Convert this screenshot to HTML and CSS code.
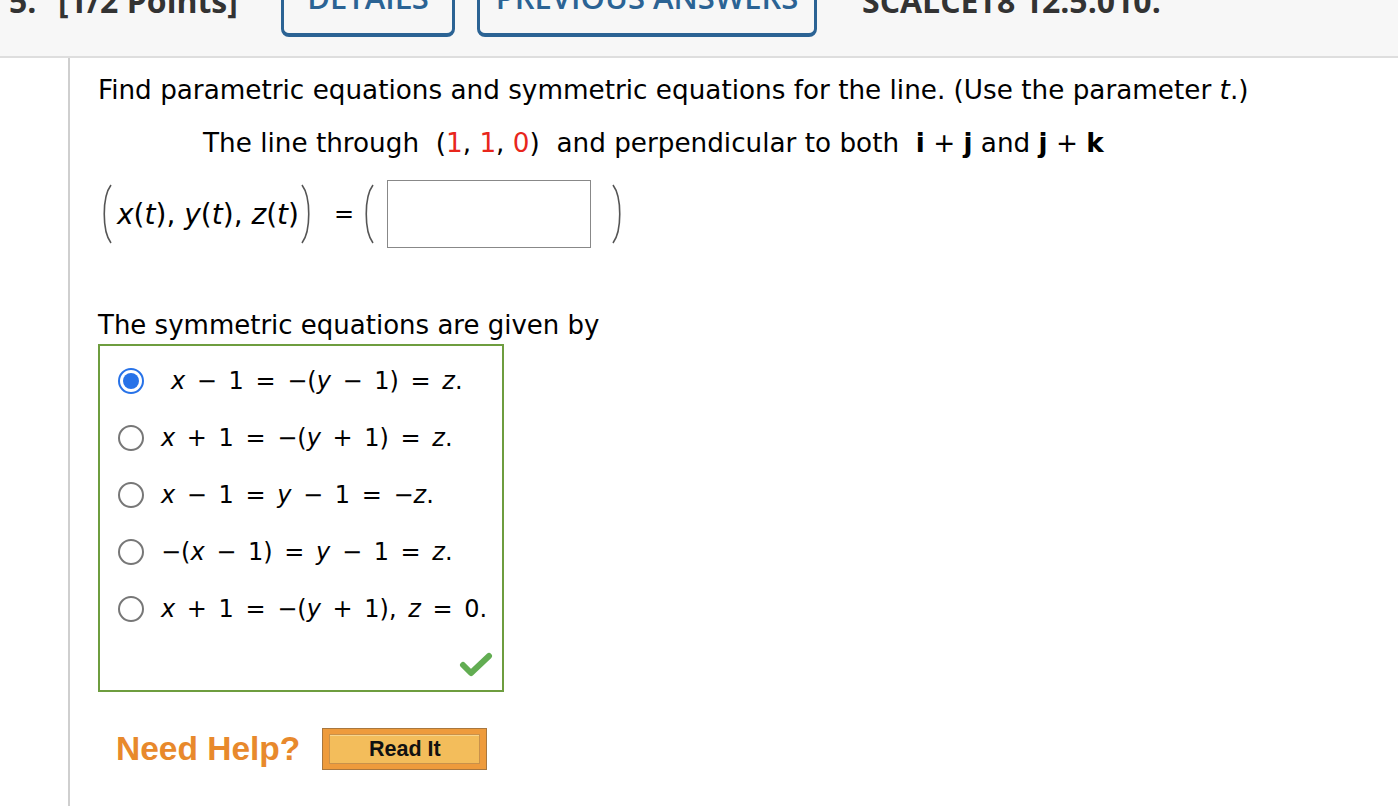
FILE: index.html
```html
<!DOCTYPE html>
<html>
<head>
<meta charset="utf-8">
<link rel="stylesheet" href="styles.css">
</head>
<body>
<div class="header">
  <div class="qnum">5.</div>
  <div class="points">[1/2 Points]</div>
  <div class="hbtn details">DETAILS</div>
  <div class="hbtn prev">PREVIOUS ANSWERS</div>
  <div class="code">SCALCET8 12.5.010.</div>
</div>
<div class="main">
  <div class="rail"></div>
  <div class="content">
    <p class="prompt">Find parametric equations and symmetric equations for the line. (Use the parameter <i>t</i>.)</p>
    <p class="given">The line through&nbsp; (<span class="red">1</span>, <span class="red">1</span>, <span class="red">0</span>)&nbsp; and perpendicular to both&nbsp; <b>i</b> + <b>j</b> and <b>j</b> + <b>k</b></p>
    <div class="eqrow">
      <svg class="paren p1" width="14" height="62" viewBox="0 0 14 62"><path d="M12 2 C3 14 3 48 12 60" fill="none" stroke="#555" stroke-width="1.6"/></svg>
      <span class="fn"><i>x</i>(<i>t</i>), <i>y</i>(<i>t</i>), <i>z</i>(<i>t</i>)</span>
      <svg class="paren p2" width="14" height="62" viewBox="0 0 14 62"><path d="M2 2 C11 14 11 48 2 60" fill="none" stroke="#555" stroke-width="1.6"/></svg>
      <span class="eq">=</span>
      <svg class="paren p3" width="14" height="62" viewBox="0 0 14 62"><path d="M12 2 C3 14 3 48 12 60" fill="none" stroke="#555" stroke-width="1.6"/></svg>
      <div class="inbox"></div>
      <svg class="paren p4" width="14" height="62" viewBox="0 0 14 62"><path d="M2 2 C11 14 11 48 2 60" fill="none" stroke="#555" stroke-width="1.6"/></svg>
    </div>
    <p class="symlabel">The symmetric equations are given by</p>
    <div class="choices">
      <div class="opt"><span class="radio on"></span><span class="m first"><i>x</i> − 1 = −(<i>y</i> − 1) = <i>z</i>.</span></div>
      <div class="opt"><span class="radio"></span><span class="m"><i>x</i> + 1 = −(<i>y</i> + 1) = <i>z</i>.</span></div>
      <div class="opt"><span class="radio"></span><span class="m"><i>x</i> − 1 = <i>y</i> − 1 = −<i>z</i>.</span></div>
      <div class="opt"><span class="radio"></span><span class="m">−(<i>x</i> − 1) = <i>y</i> − 1 = <i>z</i>.</span></div>
      <div class="opt"><span class="radio"></span><span class="m"><i>x</i> + 1 = −(<i>y</i> + 1), <i>z</i> = 0.</span></div>
      <div class="checkrow">
        <svg width="34" height="28" viewBox="0 0 34 28"><path d="M4 15 L12 23 L30 6" fill="none" stroke="#62ad52" stroke-width="6" stroke-linecap="round" stroke-linejoin="round"/></svg>
      </div>
    </div>
    <div class="help">
      <span class="needhelp">Need Help?</span>
      <span class="readit"><span class="readinner">Read It</span></span>
    </div>
  </div>
</div>
</body>
</html>
```
FILE: styles.css
```css
html, body {
  margin: 0;
  padding: 0;
  background: #fff;
  overflow: hidden;
}
body {
  width: 1398px;
  height: 806px;
  font-family: "DejaVu Sans", Verdana, sans-serif;
  color: #000;
}
.header {
  height: 56px;
  background: #f7f7f7;
  border-bottom: 2px solid #dedede;
  display: flex;
  align-items: flex-start;
  overflow: hidden;
}
.qnum, .points, .code {
  font-family: "Open Sans", sans-serif;
  font-weight: 700;
  font-size: 32px;
  line-height: 34px;
  color: #333;
  margin-top: -16px;
  white-space: nowrap;
}
.qnum { margin-left: 9px; width: 49px; }
.points { width: 223px; }
.code { margin-left: 45px; }
.hbtn {
  margin-top: -17px;
  height: 54px;
  box-sizing: border-box;
  border: 3px solid #2b6394;
  border-bottom-width: 4px;
  border-radius: 8px;
  font-family: "Open Sans", sans-serif;
  font-weight: 600;
  font-size: 31px;
  line-height: 22px;
  color: #2b6394;
  display: flex;
  justify-content: center;
  align-items: flex-start;
  overflow: hidden;
  white-space: nowrap;
}
.details { width: 174px; }
.prev { margin-left: 22px; width: 340px; }
.main {
  display: flex;
  height: 748px;
}
.rail {
  width: 2px;
  margin-left: 68px;
  background: #cfcfcf;
}
.content {
  padding-left: 28px;
  flex: 1;
}
p { margin: 0; }
.prompt {
  font-size: 26.25px;
  margin-top: 17px;
  line-height: 30px;
}
.given {
  font-size: 26.25px;
  margin-top: 23px;
  margin-left: 105px;
  line-height: 30px;
}
.red { color: #e8261c; }
.eqrow {
  display: flex;
  align-items: center;
  margin-top: 22px;
  height: 68px;
}
.paren { display: block; flex: none; }
.p1 { margin-left: 1px; }
.fn {
  font-size: 28px;
  margin-left: 4px;
  width: 183px;
  white-space: nowrap;
}
.eq {
  font-size: 24px;
  margin-left: 20px;
  width: 16px;
}
.p3 { margin-left: 11px; }
.inbox {
  width: 204px;
  height: 68px;
  box-sizing: border-box;
  border: 1px solid #888;
  margin-left: 12px;
  flex: none;
}
.p4 { margin-left: 20px; }
.symlabel {
  font-size: 26px;
  margin-top: 62px;
  line-height: 30px;
}
.choices {
  width: 406px;
  height: 348px;
  box-sizing: border-box;
  border: 2px solid #6e9d3f;
  margin-top: 4px;
  padding-top: 6px;
}
.opt {
  display: flex;
  align-items: center;
  height: 57px;
}
.radio {
  width: 22px;
  height: 22px;
  border: 2px solid #777;
  border-radius: 50%;
  margin-left: 18px;
  display: flex;
  align-items: center;
  justify-content: center;
  flex: none;
}
.radio.on {
  border-color: #2772e8;
}
.radio.on::after {
  content: "";
  width: 16px;
  height: 16px;
  border-radius: 50%;
  background: #2772e8;
}
.m {
  font-size: 24px;
  margin-left: 17px;
  word-spacing: 4px;
  white-space: nowrap;
}
.m.first { margin-left: 27px; }
.checkrow {
  display: flex;
  justify-content: flex-end;
  padding-right: 9px;
  margin-top: 13px;
}
.help {
  display: flex;
  align-items: center;
  margin-top: 36px;
  margin-left: 18px;
}
.needhelp {
  font-family: "Liberation Sans", Arial, sans-serif;
  font-weight: 700;
  font-size: 33.5px;
  color: #e8892c;
}
.readit {
  margin-left: 22px;
  width: 165px;
  height: 42px;
  box-sizing: border-box;
  background: #ee9b3c;
  border: 1px solid #a8773f;
  padding: 5px 6px;
  display: flex;
}
.readinner {
  flex: 1;
  background: #f3bd5b;
  border: 1px solid #c9914a;
  box-shadow: inset 0 1px 0 #f8d58c;
  font-family: "Liberation Sans", Arial, sans-serif;
  font-weight: 700;
  font-size: 21.5px;
  display: flex;
  align-items: center;
  justify-content: center;
  color: #111;
}
```
